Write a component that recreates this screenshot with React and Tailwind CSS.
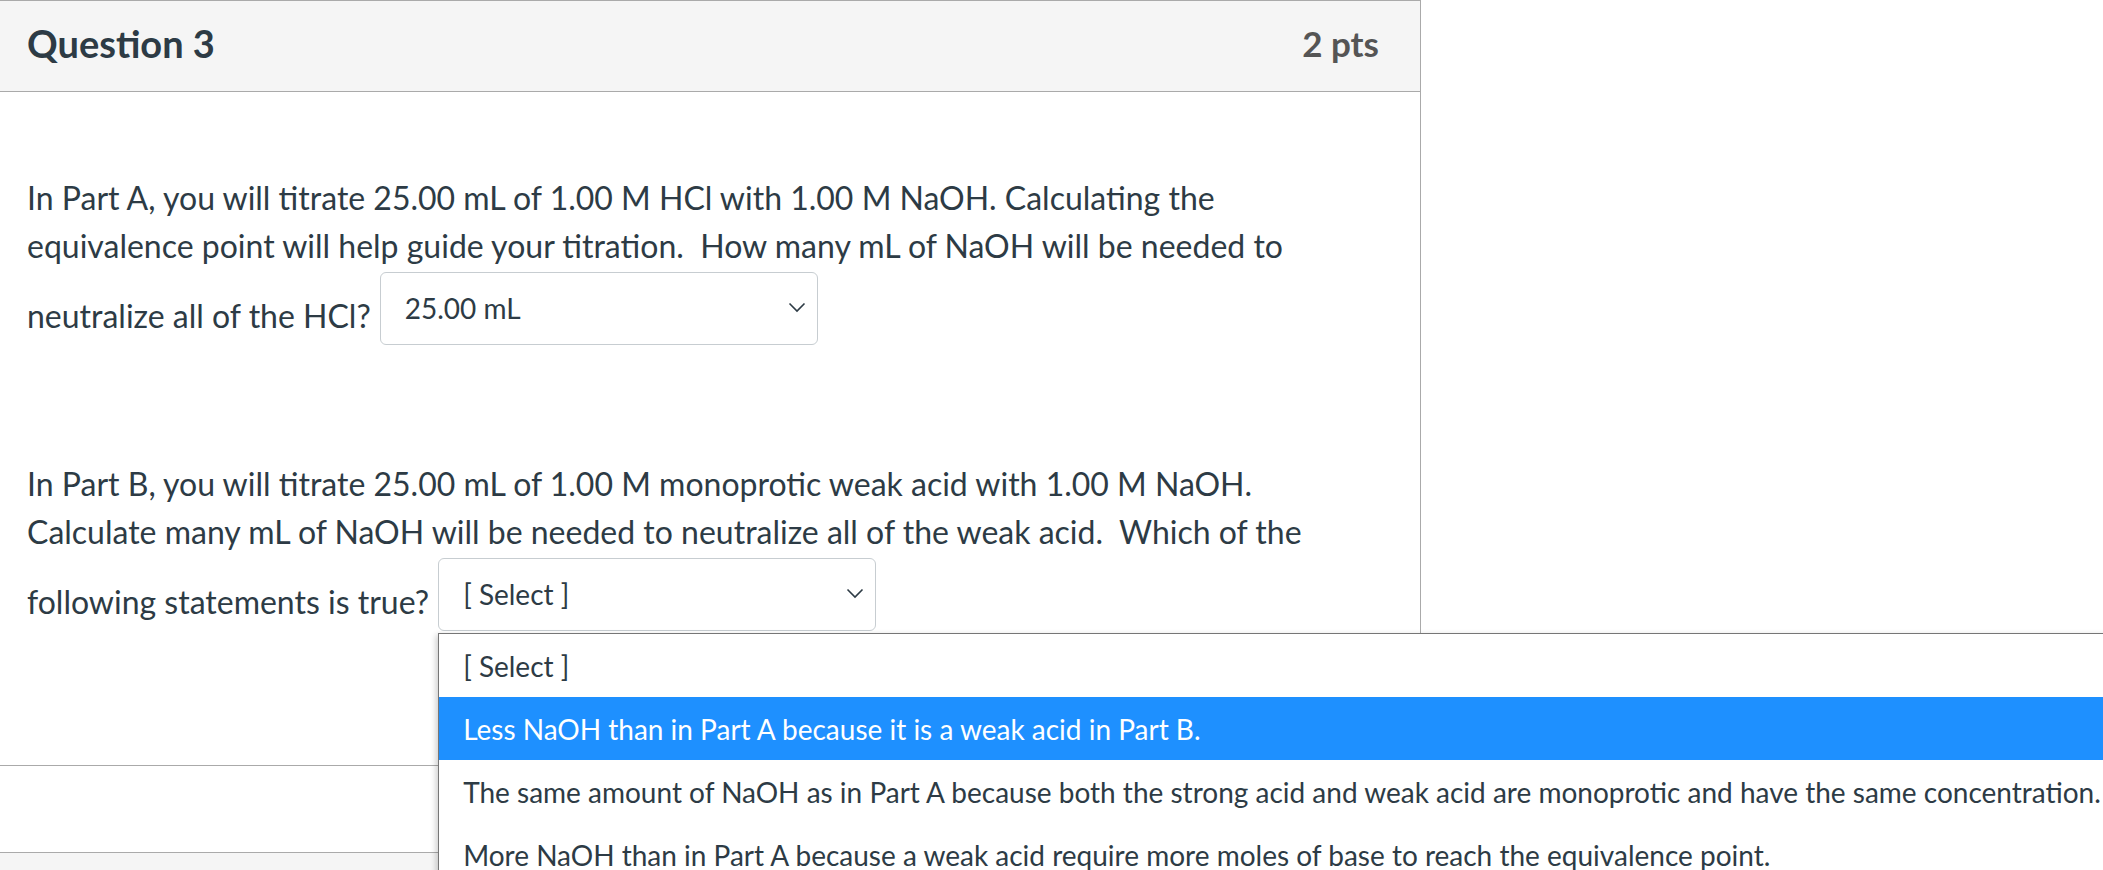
function Chevron() {
  return (
    <svg width="18" height="11" viewBox="0 0 18 11" fill="none" className="flex-shrink-0">
      <path d="M1.5 1.5l7.5 7.5 7.5-7.5" stroke="#2d3b45" strokeWidth="1.6" />
    </svg>
  )
}

function FakeSelect({ value, width, children }) {
  return (
    <div className="relative flex-shrink-0 mt-[2px]" style={{ width }}>
      <div className="h-[73px] w-full flex items-center justify-between pl-[24px] pr-[11px] pb-[2px] bg-white border border-[#c7cdd1] rounded-[6px]">
        <span className="text-[28px] leading-[48px]">{value}</span>
        <Chevron />
      </div>
      {children}
    </div>
  )
}

const options = [
  '[ Select ]',
  'Less NaOH than in Part A because it is a weak acid in Part B.',
  'The same amount of NaOH as in Part A because both the strong acid and weak acid are monoprotic and have the same concentration.',
  'More NaOH than in Part A because a weak acid require more moles of base to reach the equivalence point.',
]

export default function App() {
  return (
    <div className="w-[2103px] h-[870px] overflow-hidden bg-white relative text-[#2d3b45]"
      style={{ fontFamily: 'Lato, "Open Sans", sans-serif' }}>
      <div className="w-[1421px] border-t border-r border-[#aaaaaa]">
        <div className="h-[91px] bg-[#f5f5f5] border-b border-[#aaaaaa] flex items-center justify-between pl-[27px] pr-[41px] pb-[6px]">
          <span className="text-[38px] font-bold">Question 3</span>
          <span className="text-[35px] font-bold text-[#555555]">2 pts</span>
        </div>
        <div className="pl-[27px] pt-[82px] pb-[134px] text-[32px] leading-[48px] border-b border-[#aaaaaa]">
          <div>In Part A, you will titrate 25.00 mL of 1.00 M HCl with 1.00 M NaOH. Calculating the</div>
          <div>equivalence point will help guide your titration.&nbsp; How many mL of NaOH will be needed to</div>
          <div className="flex items-start">
            <span className="mt-[22px] mr-[9px]">neutralize all of the HCl?</span>
            <FakeSelect value="25.00 mL" width={438} />
          </div>

          <div className="mt-[115px]">In Part B, you will titrate 25.00 mL of 1.00 M monoprotic weak acid with 1.00 M NaOH.</div>
          <div>Calculate many mL of NaOH will be needed to neutralize all of the weak acid.&nbsp; Which of the</div>
          <div className="flex items-start">
            <span className="mt-[22px] mr-[9px]">following statements is true?</span>
            <FakeSelect value="[ Select ]" width={438}>
              <div className="absolute left-0 top-[75px] w-[1720px] bg-white border border-[#767676] shadow-[-2px_2px_6px_rgba(0,0,0,0.2)] z-10 text-[28px]">
                {options.map((o, i) => (
                  <div key={i}
                    className={
                      'h-[63px] flex items-center pl-[24px] whitespace-nowrap ' +
                      (i === 1 ? 'bg-[#1e90ff] text-white' : '')
                    }>
                    {o}
                  </div>
                ))}
              </div>
            </FakeSelect>
          </div>
        </div>
      </div>
      <div className="mt-[86px] w-[1421px] h-[40px] bg-[#f5f5f5] border-t border-r border-[#aaaaaa]" />
    </div>
  )
}
